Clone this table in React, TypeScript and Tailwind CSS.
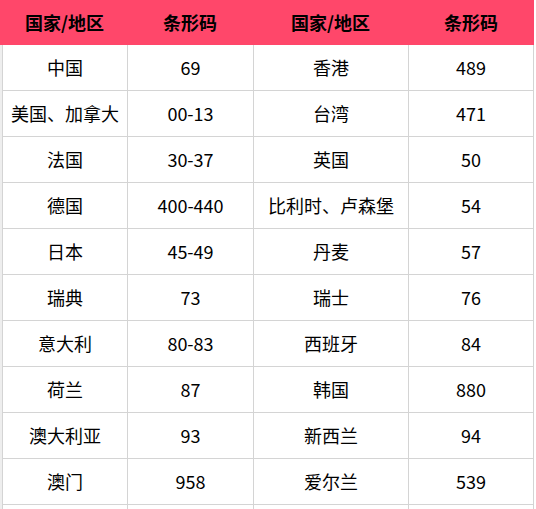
const rows: [string, string, string, string][] = [
  ["中国", "69", "香港", "489"],
  ["美国、加拿大", "00-13", "台湾", "471"],
  ["法国", "30-37", "英国", "50"],
  ["德国", "400-440", "比利时、卢森堡", "54"],
  ["日本", "45-49", "丹麦", "57"],
  ["瑞典", "73", "瑞士", "76"],
  ["意大利", "80-83", "西班牙", "84"],
  ["荷兰", "87", "韩国", "880"],
  ["澳大利亚", "93", "新西兰", "94"],
  ["澳门", "958", "爱尔兰", "539"],
  ["", "", "", ""],
];

const cols = "grid grid-cols-[125px_126px_155px_126px]";
const font = { fontFamily: '"Microsoft YaHei", "Noto Sans CJK SC", sans-serif' };

const App = () => {
  return (
    <div
      className="h-[509px] w-[536px] overflow-hidden bg-white text-[18px] text-black"
      style={font}
    >
      <div className="h-[45px] w-[534px] bg-[#ff476a] pl-[2px]">
        <div className={`${cols} h-full items-center font-bold`}>
          <div className="text-center">国家/地区</div>
          <div className="text-center">条形码</div>
          <div className="text-center">国家/地区</div>
          <div className="text-center">条形码</div>
        </div>
      </div>

      <div className="w-[534px] bg-[#eeeeee] pl-[2px]">
        {rows.map((r, i) => (
          <div key={i} className={`${cols} h-[46px] bg-white`}>
            {r.map((c, j) => (
              <div
                key={j}
                className={`flex items-center justify-center border-b border-l border-[#d4d4d4] ${
                  j === 3 ? "border-r" : ""
                }`}
              >
                {c}
              </div>
            ))}
          </div>
        ))}
      </div>
    </div>
  );
};

export default App;
